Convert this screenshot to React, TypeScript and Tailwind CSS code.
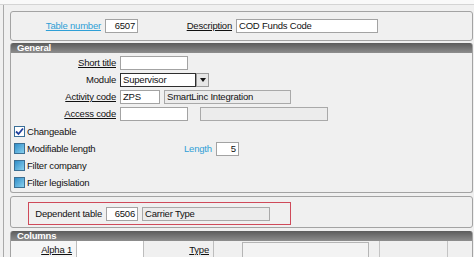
import React from "react";

const Field = (props: { w: string; text?: string; right?: boolean; disabled?: boolean; className?: string }) => {
  return (
    <div
      className={
        "h-[14px] border flex items-center px-[2px] leading-none whitespace-nowrap overflow-hidden " +
        props.w +
        " " +
        (props.disabled ? "bg-[#ececec] border-[#a9a9a9]" : "bg-white border-[#a3a3a3]") +
        " " +
        (props.right ? "justify-end" : "justify-start") +
        " " +
        (props.className ?? "")
      }
    >
      {props.text}
    </div>
  );
};

const Label = (props: { w: string; text: string; link?: boolean; plain?: boolean }) => {
  return (
    <div className={"text-right whitespace-nowrap pr-[4px] " + props.w}>
      <span className={(props.plain ? "" : "underline underline-offset-1 ") + (props.link ? "text-[#2f9fd6]" : "")}>
        {props.text}
      </span>
    </div>
  );
};

const Check = (props: { checked?: boolean; label: string }) => {
  return (
    <div className="h-[17px] flex items-center gap-[2px]">
      {props.checked ? (
        <div className="w-[11px] h-[11px] border border-[#3a6f98] bg-white flex items-center justify-center">
          <svg width="9" height="9" viewBox="0 0 9 9">
            <path d="M1 4.5 L3.5 7 L8 1.5" fill="none" stroke="#1f3f9c" strokeWidth="1.8" />
          </svg>
        </div>
      ) : (
        <div className="w-[11px] h-[11px] border border-[#3d6f92] bg-gradient-to-br from-[#2f8ec8] to-[#86d0ee]" />
      )}
      <span className="whitespace-nowrap">{props.label}</span>
    </div>
  );
};

const Bar = (props: { title: string }) => {
  return (
    <div className="h-[10px] bg-gradient-to-b from-[#5c5c5c] to-[#8e8e8e] text-white font-bold text-[9.5px] leading-[10px] pl-[6px] rounded-t-[2px]">
      {props.title}
    </div>
  );
};

export default function App() {
  return (
    <div className="w-[474px] h-[257px] overflow-hidden bg-[#f0f0f0] text-[#111] text-[9.5px] tracking-[-0.2px] leading-none font-['Liberation_Sans',Arial,sans-serif]">
      <div className="h-[5px] bg-[#f9f9f9] border-b border-[#d4d4d4]" />
      <div className="flex h-[252px]">
        <div className="w-[3px]" />
        <div className="w-px bg-[#a9a9a9]" />
        <div className="flex-1 pl-[6px] pr-[1px] pt-[6px] flex flex-col">
          {/* header panel */}
          <div className="h-[30px] rounded-[3px] border border-[#a3a3a3] flex items-center">
            <Label w="w-[94px]" text="Table number" link />
            <Field w="w-[33px]" text="6507" right />
            <Label w="w-[98px]" text="Description" />
            <Field w="w-[142px]" text="COD Funds Code" />
          </div>

          {/* General */}
          <div className="mt-[2px] h-[150px] rounded-[3px] border-x border-b border-[#a3a3a3] flex flex-col">
            <Bar title="General" />
            <div className="pt-[3px] flex flex-col gap-[3px]">
              <div className="flex items-center">
                <Label w="w-[109px]" text="Short title" />
                <Field w="w-[68px]" />
              </div>
              <div className="flex items-center">
                <Label w="w-[109px]" text="Module" plain />
                <div className="w-[76px] h-[14px] border border-[#2e2e2e] bg-white flex items-center px-[2px]">Supervisor</div>
                <div className="w-[13px] h-[14px] border border-[#9a9a9a] bg-[#e6e6e6] flex items-center justify-center">
                  <svg width="6" height="4" viewBox="0 0 6 4">
                    <path d="M0 0 H6 L3 4 Z" fill="#111" />
                  </svg>
                </div>
              </div>
              <div className="flex items-center">
                <Label w="w-[109px]" text="Activity code" />
                <Field w="w-[40px]" text="ZPS" />
                <Field w="w-[127px]" text="SmartLinc Integration" disabled className="ml-[4px]" />
              </div>
              <div className="flex items-center">
                <Label w="w-[109px]" text="Access code" />
                <Field w="w-[68px]" />
                <Field w="w-[128px]" disabled className="ml-[12px]" />
              </div>
            </div>
            <div className="mt-[2px] pl-[3px] flex flex-col">
              <Check checked label="Changeable" />
              <div className="flex items-center">
                <div className="w-[170px]">
                  <Check label="Modifiable length" />
                </div>
                <span className="text-[#2f9fd6] whitespace-nowrap">Length</span>
                <Field w="w-[23px]" text="5" right className="ml-[4px]" />
              </div>
              <Check label="Filter company" />
              <Check label="Filter legislation" />
            </div>
          </div>

          {/* Dependent table */}
          <div className="mt-[3px] h-[32px] rounded-[3px] border border-[#a3a3a3] pl-[17px] pt-[5px]">
            <div className="w-[263px] h-[23px] border border-[#cf4a5a] flex items-center">
              <Label w="w-[77px]" text="Dependent table" plain />
              <Field w="w-[32px]" text="6506" right />
              <Field w="w-[128px]" text="Carrier Type" disabled className="ml-[4px]" />
            </div>
          </div>

          {/* Columns */}
          <div className="mt-[3px] flex-1 rounded-t-[3px] border-x border-[#a3a3a3] flex flex-col">
            <Bar title="Columns" />
            <div className="flex-1 flex">
              <div className="w-[66px] bg-[#f6f6f6] border-r border-[#bdbdbd] pt-[4px]">
                <Label w="w-full" text="Alpha 1" />
              </div>
              <div className="w-[67px] bg-white border-r border-[#bdbdbd]" />
              <div className="w-[70px] border-r border-[#bdbdbd] pt-[4px]">
                <Label w="w-full" text="Type" />
              </div>
              <div className="w-[28px]" />
              <div className="w-[127px] bg-[#f3f3f3] border-x border-t border-[#b5b5b5] mt-[1px]" />
              <div className="w-[11px] border-r border-[#c4c4c4]" />
              <div className="w-[68px] border-r border-[#c4c4c4]" />
              <div className="flex-1" />
            </div>
          </div>
        </div>
      </div>
    </div>
  );
}
